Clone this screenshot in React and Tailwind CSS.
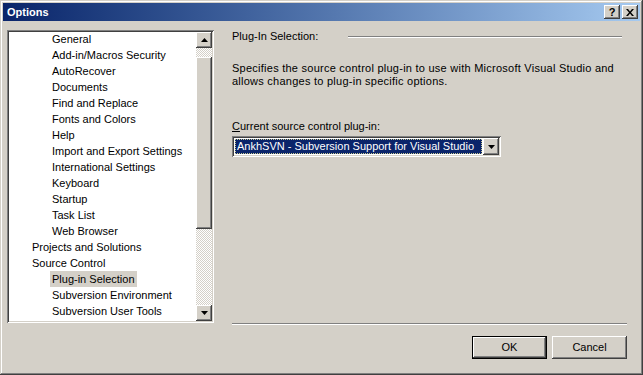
import { useState } from 'react';

const raised =
    'bg-[#d4d0c8] shadow-[inset_-1px_-1px_#404040,inset_1px_1px_#ffffff,inset_-2px_-2px_#808080,inset_2px_2px_#d4d0c8]';
const sunken =
    'shadow-[inset_1px_1px_#808080,inset_-1px_-1px_#ffffff,inset_2px_2px_#404040,inset_-2px_-2px_#d4d0c8]';

const treeItems = [
    { label: 'General', level: 2 },
    { label: 'Add-in/Macros Security', level: 2 },
    { label: 'AutoRecover', level: 2 },
    { label: 'Documents', level: 2 },
    { label: 'Find and Replace', level: 2 },
    { label: 'Fonts and Colors', level: 2 },
    { label: 'Help', level: 2 },
    { label: 'Import and Export Settings', level: 2 },
    { label: 'International Settings', level: 2 },
    { label: 'Keyboard', level: 2 },
    { label: 'Startup', level: 2 },
    { label: 'Task List', level: 2 },
    { label: 'Web Browser', level: 2 },
    { label: 'Projects and Solutions', level: 1 },
    { label: 'Source Control', level: 1 },
    { label: 'Plug-in Selection', level: 2 },
    { label: 'Subversion Environment', level: 2 },
    { label: 'Subversion User Tools', level: 2 },
];

function Arrow({ down }) {
    return (
        <svg width="7" height="4" viewBox="0 0 7 4" className="block">
            {down ? <path d="M0 0h7L3.5 4z" fill="#000" /> : <path d="M0 4h7L3.5 0z" fill="#000" />}
        </svg>
    );
}

function ScrollButton({ down }) {
    return (
        <div className={`w-[16px] h-[16px] flex items-center justify-center ${raised}`}>
            <Arrow down={down} />
        </div>
    );
}

function TitleButton({ children }) {
    return (
        <div className={`w-[16px] h-[14px] flex items-center justify-center text-[11px] font-bold leading-none text-black ${raised}`}>
            {children}
        </div>
    );
}

function Button({ children, primary }) {
    return (
        <div
            className={
                'w-[75px] h-[23px] flex items-center justify-center ' +
                (primary
                    ? 'bg-[#d4d0c8] border border-black shadow-[inset_-1px_-1px_#404040,inset_1px_1px_#ffffff,inset_-2px_-2px_#808080]'
                    : raised)
            }
        >
            {children}
        </div>
    );
}

export default function App() {
    const [selected] = useState('Plug-in Selection');

    return (
        <div className="w-[643px] h-[375px] bg-[#d4d0c8] p-[3px] flex flex-col text-[11px] leading-[13px] text-black font-['Liberation_Sans',Arial,sans-serif] shadow-[inset_-1px_-1px_#404040,inset_1px_1px_#d4d0c8,inset_-2px_-2px_#808080,inset_2px_2px_#ffffff] overflow-hidden">
            {/* title bar */}
            <div className="h-[18px] flex items-center bg-linear-to-r from-[#0a246a] to-[#a6caf0] pl-[2px] pr-[2px]">
                <span className="text-white font-bold text-[11px] ml-[2px]">Options</span>
                <div className="ml-auto flex gap-[2px]">
                    <TitleButton>?</TitleButton>
                    <TitleButton>
                        <svg width="8" height="7" viewBox="0 0 8 7">
                            <path d="M0 0h2l2 2.5L6 0h2L5 3.5 8 7H6L4 4.5 2 7H0l3-3.5z" fill="#000" />
                        </svg>
                    </TitleButton>
                </div>
            </div>

            <div className="flex flex-1 min-h-0 pl-[4px] pt-[9px]">
                {/* tree */}
                <div className={`w-[207px] h-[293px] bg-white p-[2px] flex ${sunken}`}>
                    <div className="flex-1 overflow-hidden">
                        <div className="-mt-[1px]">
                            {treeItems.map((item) => (
                                <div
                                    key={item.label}
                                    className={'h-[16px] flex items-center ' + (item.level === 2 ? 'pl-[41px]' : 'pl-[21px]')}
                                >
                                    <span
                                        className={
                                            'px-[2px] h-[16px] flex items-center whitespace-nowrap ' +
                                            (item.label === selected ? 'bg-[#d4d0c8]' : '')
                                        }
                                    >
                                        {item.label}
                                    </span>
                                </div>
                            ))}
                        </div>
                    </div>
                    <div className="w-[16px] flex flex-col bg-[repeating-conic-gradient(#ffffff_0%_25%,#d4d0c8_0%_50%)] bg-[length:2px_2px]">
                        <ScrollButton />
                        <div className={`mt-[9px] h-[172px] ${raised}`} />
                        <div className="flex-1" />
                        <ScrollButton down />
                    </div>
                </div>

                {/* right panel */}
                <div className="flex-1 ml-[18px] mr-[13px] flex flex-col pb-[13px]">
                    <div className="h-[13px] flex items-center">
                        <span>Plug-In Selection:</span>
                        <div className="flex-1 ml-[30px] mr-[5px] h-[2px] border-t border-[#808080] border-b border-b-white" />
                    </div>
                    <p className="mt-[19px] tracking-[0.25px]">
                        Specifies the source control plug-in to use with Microsoft Visual Studio and
                        <br />
                        allows changes to plug-in specific options.
                    </p>
                    <div className="mt-[32px]">
                        <span className="underline">C</span>urrent source control plug-in:
                    </div>
                    <div className={`mt-[3px] w-[269px] h-[21px] bg-white p-[2px] flex ${sunken}`}>
                        <div className="flex-1 p-[1px]">
                            <div className="h-full bg-[#0a246a] text-white border border-dotted border-[#c8c890] flex items-center pl-[1px] whitespace-nowrap">
                                AnkhSVN - Subversion Support for Visual Studio
                            </div>
                        </div>
                        <div className={`w-[16px] h-[17px] flex items-center justify-center ${raised}`}>
                            <Arrow down />
                        </div>
                    </div>

                    <div className="mt-auto h-[2px] border-t border-[#808080] border-b border-b-white" />
                    <div className="mt-[11px] flex justify-end gap-[5px]">
                        <Button primary>OK</Button>
                        <Button>Cancel</Button>
                    </div>
                </div>
            </div>
        </div>
    );
}
